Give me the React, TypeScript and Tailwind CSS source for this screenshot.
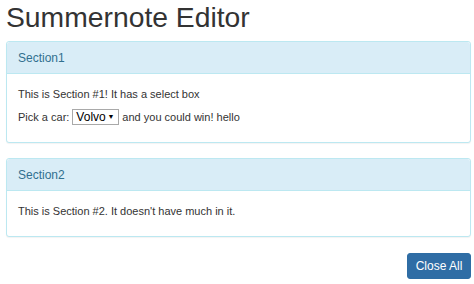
const Panel = ({ title, children }: { title: string; children: React.ReactNode }) => {
  return (
    <div className="mb-[15px] rounded-[3px] border border-[#bce8f1] bg-white shadow-[0_1px_1px_rgba(0,0,0,0.05)]">
      <div className="h-[32px] flex items-center rounded-t-[3px] border-b border-[#bce8f1] bg-[#d9edf7] px-[11px] text-[12px] text-[#31708f]">
        {title}
      </div>
      <div className="px-[11px] pt-[12px] pb-[17px]">{children}</div>
    </div>
  );
};

export default function App() {
  return (
    <div className="h-[284px] w-[474px] overflow-hidden bg-white pl-[6px] pr-[3px] text-[11px] leading-[16px] text-[#333] font-['Liberation_Sans',Arial,sans-serif]">
      <h1 className="pt-[1px] mb-[8px] text-[28.3px] leading-[32px] text-[#333]">Summernote Editor</h1>

      <Panel title="Section1">
        <p className="mb-[7px]">This is Section #1! It has a select box</p>
        <p className="flex items-center">
          Pick a car:
          <span className="mx-[3px] inline-flex h-[16px] w-[47px] items-center justify-between border border-[#a9a9a9] bg-white pl-[3px] pr-[4px] text-[12px] text-black">
            Volvo
            <span className="text-[7px]">▼</span>
          </span>
          and you could win! hello
        </p>
      </Panel>

      <Panel title="Section2">
        <p>This is Section #2. It doesn't have much in it.</p>
      </Panel>

      <div className="flex justify-end pt-[1px]">
        <button className="h-[26px] w-[64px] rounded-[3px] border border-[#2e6da4] bg-[#2f6da5] text-[12px] text-white">
          Close All
        </button>
      </div>
    </div>
  );
}
